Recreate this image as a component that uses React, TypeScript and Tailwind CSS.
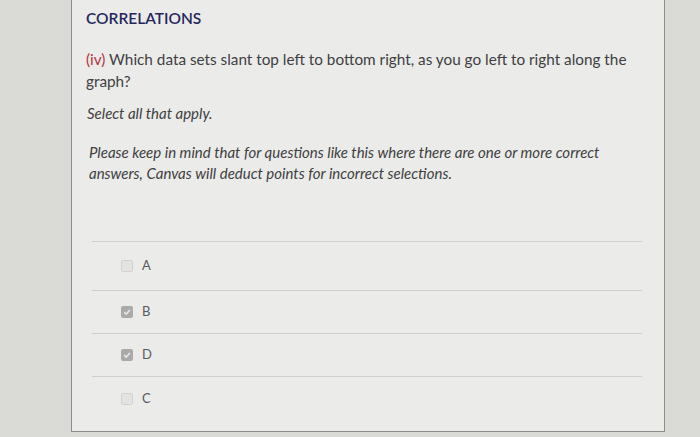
import React from 'react';

type Option = { label: string; checked: boolean };

const options: Option[] = [
  { label: 'A', checked: false },
  { label: 'B', checked: true },
  { label: 'D', checked: true },
  { label: 'C', checked: false },
];

function Checkbox({ checked }: { checked: boolean }) {
  if (checked) {
    return (
      <span className="flex h-[12px] w-[12px] items-center justify-center rounded-[2px] bg-[#a9aaa9]">
        <svg viewBox="0 0 12 12" className="h-[10px] w-[10px]">
          <path d="M2.5 6.2 L5 8.5 L9.5 3.5" fill="none" stroke="#e9e9e7" strokeWidth="1.8" />
        </svg>
      </span>
    );
  }
  return <span className="h-[12px] w-[12px] rounded-[2px] border border-[#d2d3d1] bg-[#e3e4e2]" />;
}

export default function App() {
  return (
    <div
      className="h-[437px] w-[700px] overflow-hidden bg-[#dadad7] pl-[71px]"
      style={{ fontFamily: 'Lato, "Noto Sans", sans-serif' }}
    >
      <div className="h-[432px] w-[594px] border-r border-b border-l border-[#8d8d8b] bg-[#ebebe9] pt-[7px] pl-[14px]">
        <h2 className="text-[15.5px] leading-[22px] font-semibold text-[#26275f]">CORRELATIONS</h2>

        <p className="mt-[19px] w-[560px] text-[15.3px] leading-[22px] text-[#404042]">
          <span className="text-[#b3343f]">(iv)</span> Which data sets slant top left to bottom right, as you go left to
          right along the graph?
        </p>

        <p className="mt-[10px] pl-[1px] text-[15px] leading-[22px] text-[#404042] italic">Select all that apply.</p>

        <p className="mt-[18px] w-[540px] pl-[3px] text-[15px] leading-[21px] text-[#404042] italic">
          Please keep in mind that for questions like this where there are one or more correct answers, Canvas will
          deduct points for incorrect selections.
        </p>

        <div className="mt-[57px] mr-[22px] ml-[6px] border-t border-[#d0d0ce]">
          {options.map((o, i) => (
            <div
              key={o.label}
              className={`flex items-center gap-[9px] border-b border-[#cfcfcd] pl-[29px] last:border-b-0 ${i === 0 ? 'h-[49px]' : 'h-[43px]'}`}
            >
              <Checkbox checked={o.checked} />
              <span className="text-[13px] text-[#5a5a5c]">{o.label}</span>
            </div>
          ))}
        </div>
      </div>
    </div>
  );
}
